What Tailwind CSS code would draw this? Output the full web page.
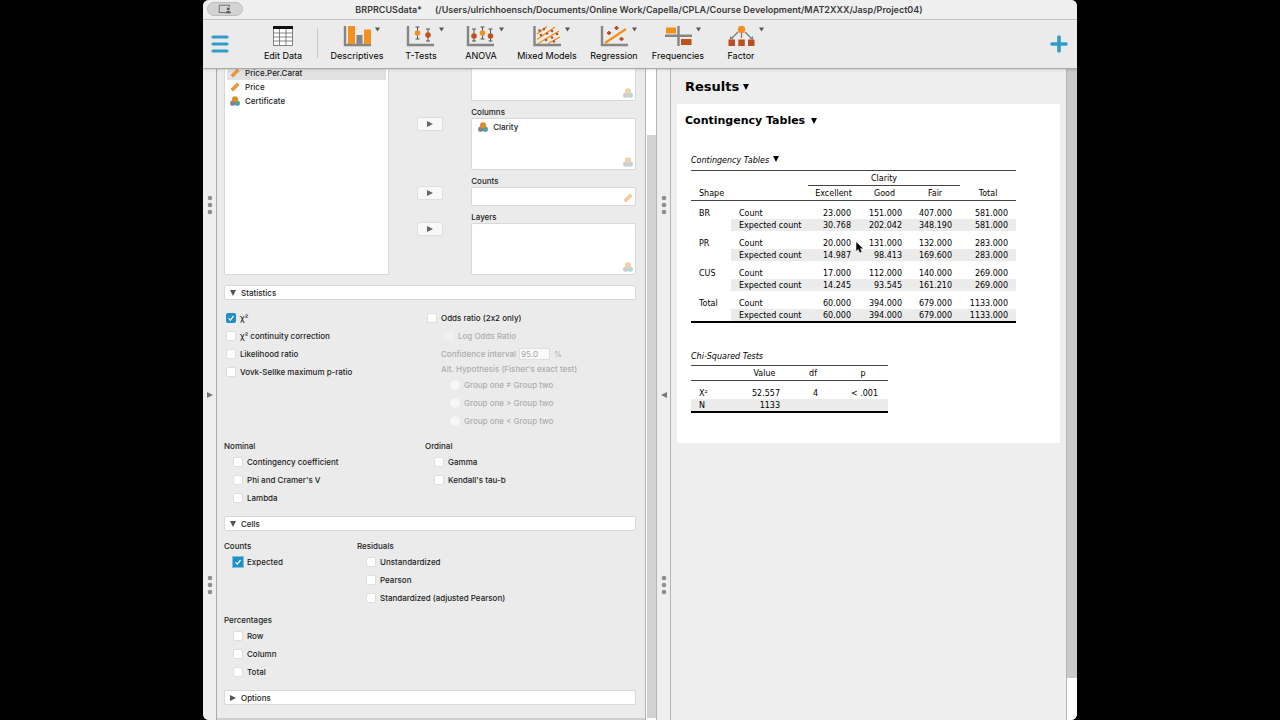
<!DOCTYPE html>
<html lang="en">
<head>
  <meta charset="UTF-8" />
  <meta name="viewport" content="width=device-width, initial-scale=1.0" />
  <title>BRPRCUSdata*</title>
  <script src="https://cdn.jsdelivr.net/npm/@tailwindcss/browser@4"></script>
</head>
<body class="h-screen overflow-hidden bg-black px-[203px] font-['Inter','Liberation_Sans',sans-serif] text-[8px] leading-3 font-medium text-[#1c1c1c]">
  <!-- Shared shapes -->
  <svg class="hidden">
    <symbol id="scale" viewBox="0 0 12 12">
      <path d="M1.2 8.4 8.4 1.2 10.9 3.7 3.7 10.900Z" fill="#e9963a" stroke="#e9963a" stroke-width="1.200" stroke-linejoin="round" />
      <path d="M3.4 6.2l1 1M5 4.6l1.3 1.3M6.7 3l1 1" stroke="#f6c58c" stroke-width=".7" />
    </symbol>
    <symbol id="nominal" viewBox="0 0 12 12">
      <circle cx="3.2" cy="8.600" r="3.100" fill="#80858a" />
      <circle cx="8.8" cy="8.600" r="3.100" fill="#4c9fa8" />
      <circle cx="6" cy="3.900" r="3.600" fill="#df8a26" />
    </symbol>
    <symbol id="tri-right" viewBox="0 0 6 6"><path d="M0 0 6 3 0 6Z" fill="currentColor" /></symbol>
    <symbol id="tri-down" viewBox="0 0 6 6"><path d="M0 0H6L3 6Z" fill="currentColor" /></symbol>
    <symbol id="tri-left" viewBox="0 0 6 6"><path d="M6 0 0 3 6 6Z" fill="currentColor" /></symbol>
    <symbol id="tick" viewBox="0 0 10 10"><path d="M2.5 5.2 4.3 7.2 7.6 2.8" fill="none" stroke="#fff" stroke-width="1.2" /></symbol>
    <symbol id="grip" viewBox="0 0 6 20">
      <circle cx="3" cy="3" r="2.3" fill="#8f8f8f" /><circle cx="3" cy="10" r="2.3" fill="#8f8f8f" /><circle cx="3" cy="17" r="2.3" fill="#8f8f8f" />
    </symbol>
  </svg>

  <div class="flex h-full flex-col overflow-hidden rounded-md bg-[#ebebeb]">
    <!-- Title bar -->
    <header class="relative flex h-5 shrink-0 items-center justify-center border-b border-[#c6c6c6] bg-[#f0efef] pr-0.5">
      <button class="absolute top-0.5 left-1 flex h-[14px] w-9 items-center justify-center rounded-full border border-[#bdbdbd] bg-[#d3d3d3]" aria-label="Share window">
        <svg class="h-[10px] w-[14px]" viewBox="0 0 14 10" fill="none" stroke="#666" stroke-width=".9">
          <path d="M7.5 8.5H1.2V1.2H11.5V3" />
          <circle cx="10.3" cy="5" r="1.4" fill="#555" stroke="none" />
          <path d="M7.6 9.3c0-3 5.4-3 5.4 0Z" fill="#555" stroke="none" />
        </svg>
      </button>
      <h1 class="flex gap-[13px] text-[9px] font-semibold whitespace-nowrap text-[#3a3a3a]"><span>BRPRCUSdata*</span><span>(/Users/ulrichhoensch/Documents/Online Work/Capella/CPLA/Course Development/MAT2XXX/Jasp/Project04)</span></h1>
    </header>

    <!-- Ribbon -->
    <nav class="relative z-10 flex h-[49px] shrink-0 border-b border-[#a9a9a9] bg-[#ebebeb] text-[9px] font-normal text-black shadow">
      <button class="flex w-[34px] items-center justify-center" aria-label="Menu">
        <svg class="h-[18px] w-[18px]" viewBox="0 0 18 18" stroke="#2f9dcc" stroke-width="3.2" stroke-linecap="round"><path d="M2 2H16M2 9H16M2 16H16" /></svg>
      </button>
      <button class="ml-3 flex w-[68px] flex-col items-center gap-[3px] pt-[5px]">
        <svg class="h-[22px] w-[46px]" viewBox="0 0 46 22">
          <rect x="13.5" y="1.5" width="19" height="19" fill="#fff" stroke="#666" stroke-width=".8" />
          <rect x="13" y="1" width="20" height="3" fill="#111" />
          <path d="M13.5 8H32.5M13.5 12H32.5M13.5 16H32.5M19.5 4V20.5M26 4V20.5" stroke="#666" stroke-width=".8" />
        </svg>
        <span>Edit Data</span>
      </button>
      <div class="mt-2 h-[30px] w-[7px] border-l border-[#c9c9c9]"></div>
      <button class="flex w-[66px] flex-col items-center gap-[3px] pt-[5px]">
        <svg class="h-[22px] w-[46px]" viewBox="0 0 46 22">
          <path d="M11 1V20H37" fill="none" stroke="#858585" stroke-width="2.4" />
          <path d="M14 1H21V19H14ZM30 4.500H37V19H30Z" fill="#f4901e" /><path d="M22.500 10H28.500V19H22.500Z" fill="#858585" />
          <path d="M41 2.500H46L43.500 6.500Z" fill="#555" />
        </svg>
        <span>Descriptives</span>
      </button>
      <button class="flex w-[62px] flex-col items-center gap-[3px] pt-[5px]">
        <svg class="h-[22px] w-[46px]" viewBox="0 0 46 22">
          <path d="M10 1V20H36" fill="none" stroke="#858585" stroke-width="2.4" />
          <path d="M19.500 2V14M17.500 2H21.500M17.500 14H21.500M30 4V16M28 4H32M28 16H32" stroke="#555" />
          <circle cx="19.500" cy="8" r="2.800" fill="#f4901e" /><circle cx="30" cy="10" r="2.800" fill="#c1501c" />
          <path d="M41 2.500H46L43.500 6.500Z" fill="#555" />
        </svg>
        <span>T-Tests</span>
      </button>
      <button class="flex w-[58px] flex-col items-center gap-[3px] pt-[5px]">
        <svg class="h-[22px] w-[46px]" viewBox="0 0 46 22">
          <path d="M10 1V20H36" fill="none" stroke="#858585" stroke-width="2.4" />
          <path d="M16 4V16M14 4H18M14 16H18M24.500 2V14M22.500 2H26.500M22.500 14H26.500M32.500 4V16M30.500 4H34.500M30.500 16H34.500" stroke="#555" />
          <circle cx="16" cy="11" r="2.800" fill="#c1501c" /><circle cx="24.500" cy="8" r="2.800" fill="#f4901e" /><circle cx="32.500" cy="11" r="2.800" fill="#c1501c" />
          <path d="M41 2.500H46L43.500 6.500Z" fill="#555" />
        </svg>
        <span>ANOVA</span>
      </button>
      <button class="flex w-[74px] flex-col items-center gap-[3px] pt-[5px]">
        <svg class="h-[22px] w-[46px]" viewBox="0 0 46 22">
          <path d="M10.500 1V20H37" fill="none" stroke="#858585" stroke-width="2.4" />
          <path d="M13 9 23 1.500M13 14.500 31 2M14 18.500 35 6M24 18.500 36 12" stroke="#f4901e" stroke-width="1.400" />
          <g fill="#b9501f"><circle cx="15.500" cy="5.500" r="1.300" /><circle cx="20" cy="4" r="1.300" /><circle cx="17" cy="10" r="1.300" /><circle cx="23" cy="8.500" r="1.300" /><circle cx="28" cy="6" r="1.300" /><circle cx="22" cy="15" r="1.300" /><circle cx="28" cy="12.500" r="1.300" /><circle cx="33" cy="9" r="1.300" /><circle cx="30" cy="16.500" r="1.300" /></g>
          <path d="M41 2.500H46L43.500 6.500Z" fill="#555" />
        </svg>
        <span class="whitespace-nowrap">Mixed Models</span>
      </button>
      <button class="flex w-[60px] flex-col items-center gap-[3px] pt-[5px]">
        <svg class="h-[22px] w-[46px]" viewBox="0 0 46 22">
          <path d="M11 1V20H37" fill="none" stroke="#858585" stroke-width="2.4" />
          <path d="M14 18 35 4" stroke="#f4901e" stroke-width="2.200" />
          <path d="M16 8H20M18 6V10M23.500 3H27.500M25.500 1V5M28.500 14H32.500M30.500 12V16" stroke="#b9501f" stroke-width="1.800" />
          <path d="M41 2.500H46L43.500 6.500Z" fill="#555" />
        </svg>
        <span>Regression</span>
      </button>
      <button class="flex w-[68px] flex-col items-center gap-[3px] pt-[5px]">
        <svg class="h-[22px] w-[46px]" viewBox="0 0 46 22">
          <path d="M23.500 1V21M10 10.800H37" stroke="#858585" stroke-width="2.400" />
          <rect x="11" y="2.500" width="10" height="6" fill="#f4901e" /><rect x="26" y="14" width="10.500" height="6" fill="#c1501c" />
          <path d="M41 2.500H46L43.500 6.500Z" fill="#555" />
        </svg>
        <span>Frequencies</span>
      </button>
      <button class="flex w-[58px] flex-col items-center gap-[3px] pt-[5px]">
        <svg class="h-[22px] w-[46px]" viewBox="0 0 46 22">
          <path d="M20 7 14 13M23.500 7V13M27 7 33 13" stroke="#777" stroke-width="1.200" />
          <path d="M12 14.200V11L15.300 14.200ZM35 14.200V11L31.700 14.200Z" fill="#777" />
          <circle cx="23.500" cy="4.500" r="3.700" fill="#f4901e" />
          <path d="M10.500 14.500H17V21H10.500ZM20.300 14.500H26.800V21H20.300ZM30 14.500H36.500V21H30Z" fill="#b9501f" />
          <path d="M41 2.500H46L43.500 6.500Z" fill="#555" />
        </svg>
        <span>Factor</span>
      </button>
      <button class="ml-auto flex w-9 items-center justify-center" aria-label="Show modules">
        <svg class="h-[18px] w-[18px]" viewBox="0 0 18 18" stroke="#2f9dcc" stroke-width="3.6" stroke-linecap="round"><path d="M2 9H16M9 2V16" /></svg>
      </button>
    </nav>

    <main class="flex min-h-0 flex-1">
      <!-- Data splitter -->
      <div class="flex w-[14px] shrink-0 flex-col items-center justify-center gap-[177px] border-r border-[#a9a9a9] bg-[#efefef]">
        <svg class="h-5 w-[6px] shrink-0"><use href="#grip" /></svg>
        <svg class="h-[6px] w-[6px] shrink-0 text-[#777]"><use href="#tri-right" /></svg>
        <svg class="h-5 w-[6px] shrink-0"><use href="#grip" /></svg>
      </div>

      <!-- Analysis form -->
      <form class="min-w-0 flex-1 overflow-hidden pr-[9px] pl-[7px]">
        <div class="grid grid-cols-[2fr_3fr]">
          <ul class="overflow-hidden rounded-b-[2px] border border-t-0 border-[#d8d8d8] bg-white px-0.5">
            <li class="-mt-[3px] flex h-[14px] items-center gap-[5px] bg-[#e2e2e2] pl-[3px]"><svg class="h-[10px] w-[10px]"><use href="#scale" /></svg>Price.Per.Carat</li>
            <li class="flex h-[14px] items-center gap-[5px] pl-[3px]"><svg class="h-[10px] w-[10px]"><use href="#scale" /></svg>Price</li>
            <li class="flex h-[14px] items-center gap-[5px] pl-[3px]"><svg class="h-[10px] w-[10px]"><use href="#nominal" /></svg>Certificate</li>
          </ul>
          <div>
            <div class="ml-[33.33%] flex h-8 items-end justify-end rounded-b-[2px] border border-t-0 border-[#d8d8d8] bg-white p-0.5">
              <svg class="h-[10px] w-[10px] opacity-40"><use href="#nominal" /></svg>
            </div>
            <div class="grid grid-cols-[1fr_2fr]">
              <button type="button" class="mt-4 flex h-[14px] w-[26px] items-center justify-center justify-self-center rounded-[2px] border border-[#dedede] bg-[#f8f8f8] text-[#666]" aria-label="Move to columns"><svg class="h-[6px] w-[6px]"><use href="#tri-right" /></svg></button>
              <div>
                <h3 class="h-[17px] pt-[5px]">Columns</h3>
                <div class="flex h-[52px] justify-between rounded-[2px] border border-[#d8d8d8] bg-white p-0.5 pl-[6px]">
                  <span class="flex h-[11px] items-center gap-[5px]"><svg class="h-[10px] w-[10px]"><use href="#nominal" /></svg>Clarity</span>
                  <svg class="h-[10px] w-[10px] self-end opacity-40"><use href="#nominal" /></svg>
                </div>
              </div>
              <button type="button" class="mt-4 flex h-[14px] w-[26px] items-center justify-center justify-self-center rounded-[2px] border border-[#dedede] bg-[#f8f8f8] text-[#666]" aria-label="Move to counts"><svg class="h-[6px] w-[6px]"><use href="#tri-right" /></svg></button>
              <div>
                <h3 class="h-[17px] pt-[5px]">Counts</h3>
                <div class="flex h-[19px] items-end justify-end rounded-[2px] border border-[#d8d8d8] bg-white p-0.5">
                  <svg class="h-[10px] w-[10px] opacity-50"><use href="#scale" /></svg>
                </div>
              </div>
              <button type="button" class="mt-4 flex h-[14px] w-[26px] items-center justify-center justify-self-center rounded-[2px] border border-[#dedede] bg-[#f8f8f8] text-[#666]" aria-label="Move to layers"><svg class="h-[6px] w-[6px]"><use href="#tri-right" /></svg></button>
              <div>
                <h3 class="h-[17px] pt-[5px]">Layers</h3>
                <div class="flex h-[52px] items-end justify-end rounded-[2px] border border-[#d8d8d8] bg-white p-0.5">
                  <svg class="h-[10px] w-[10px] opacity-40"><use href="#nominal" /></svg>
                </div>
              </div>
            </div>
          </div>
        </div>

        <!-- Statistics -->
        <button type="button" class="mt-[10px] flex h-[15px] w-full items-center gap-[5px] rounded-[2px] border border-[#d8d8d8] bg-white pl-[5px]"><svg class="h-[6px] w-[6px] text-[#555]"><use href="#tri-down" /></svg>Statistics</button>
        <div class="mt-[9px] grid grid-cols-[201px_1fr]">
          <div class="pl-0.5">
            <label class="relative flex h-[18px] items-center gap-1"><input type="checkbox" checked class="h-[10px] w-[10px] appearance-none rounded-[2px] bg-[#1f8fc4]" /><svg class="pointer-events-none absolute left-0 h-[10px] w-[10px]"><use href="#tick" /></svg>χ²</label>
            <label class="flex h-[18px] items-center gap-1"><input type="checkbox" class="h-[10px] w-[10px] appearance-none rounded-[2px] border border-[#dedede] bg-white" />χ² continuity correction</label>
            <label class="flex h-[18px] items-center gap-1"><input type="checkbox" class="h-[10px] w-[10px] appearance-none rounded-[2px] border border-[#dedede] bg-white" />Likelihood ratio</label>
            <label class="flex h-[18px] items-center gap-1"><input type="checkbox" class="h-[10px] w-[10px] appearance-none rounded-[2px] border border-[#dedede] bg-white" />Vovk-Sellke maximum p-ratio</label>
          </div>
          <div class="pl-0.5">
            <label class="flex h-[18px] items-center gap-1 [font-feature-settings:'calt'_0]"><input type="checkbox" class="h-[10px] w-[10px] appearance-none rounded-[2px] border border-[#dedede] bg-white" />Odds ratio (2x2 only)</label>
            <fieldset disabled class="pl-[14px] text-[#adadad]">
              <label class="flex h-[18px] items-center gap-1 pl-[3px]"><input type="checkbox" class="h-[10px] w-[10px] appearance-none rounded-[2px] bg-[#f0f0f0]" />Log Odds Ratio</label>
              <div class="flex h-[17px] items-center gap-[3px]"><label for="ci">Confidence interval</label><input id="ci" type="text" value="95.0" class="h-3 w-[31px] border border-[#dedede] bg-[#fafafa] px-px" /><span class="pl-px">%</span></div>
              <p class="h-[14px] pt-px">Alt. Hypothesis (Fisher's exact test)</p>
              <label class="flex h-[18px] items-center gap-1 pl-[9px]"><input type="radio" name="alt" class="h-[10px] w-[10px] appearance-none rounded-full bg-[#f6f6f6]" />Group one ≠ Group two</label>
              <label class="flex h-[18px] items-center gap-1 pl-[9px]"><input type="radio" name="alt" class="h-[10px] w-[10px] appearance-none rounded-full bg-[#f6f6f6]" />Group one &gt; Group two</label>
              <label class="flex h-[18px] items-center gap-1 pl-[9px]"><input type="radio" name="alt" class="h-[10px] w-[10px] appearance-none rounded-full bg-[#f6f6f6]" />Group one &lt; Group two</label>
            </fieldset>
          </div>
        </div>
        <div class="mt-[10px] grid grid-cols-[201px_1fr]">
          <div>
            <h3 class="h-[13px]">Nominal</h3>
            <label class="flex h-[18px] items-center gap-1 pl-[9px]"><input type="checkbox" class="h-[10px] w-[10px] appearance-none rounded-[2px] border border-[#dedede] bg-white" />Contingency coefficient</label>
            <label class="flex h-[18px] items-center gap-1 pl-[9px]"><input type="checkbox" class="h-[10px] w-[10px] appearance-none rounded-[2px] border border-[#dedede] bg-white" />Phi and Cramer's V</label>
            <label class="flex h-[18px] items-center gap-1 pl-[9px]"><input type="checkbox" class="h-[10px] w-[10px] appearance-none rounded-[2px] border border-[#dedede] bg-white" />Lambda</label>
          </div>
          <div>
            <h3 class="h-[13px]">Ordinal</h3>
            <label class="flex h-[18px] items-center gap-1 pl-[9px]"><input type="checkbox" class="h-[10px] w-[10px] appearance-none rounded-[2px] border border-[#dedede] bg-white" />Gamma</label>
            <label class="flex h-[18px] items-center gap-1 pl-[9px]"><input type="checkbox" class="h-[10px] w-[10px] appearance-none rounded-[2px] border border-[#dedede] bg-white" />Kendall's tau-b</label>
          </div>
        </div>

        <!-- Cells -->
        <button type="button" class="mt-[9px] flex h-[15px] w-full items-center gap-[5px] rounded-[2px] border border-[#d8d8d8] bg-white pl-[5px]"><svg class="h-[6px] w-[6px] text-[#555]"><use href="#tri-down" /></svg>Cells</button>
        <div class="mt-[9px] grid grid-cols-[133px_1fr]">
          <div>
            <h3 class="h-[13px]">Counts</h3>
            <label class="relative flex h-[18px] items-center gap-1 pl-[9px]"><input type="checkbox" checked class="h-[10px] w-[10px] appearance-none bg-[#1f8fc4] ring-1 ring-[#7cc0ea]" /><svg class="pointer-events-none absolute left-[9px] h-[10px] w-[10px]"><use href="#tick" /></svg>Expected</label>
          </div>
          <div>
            <h3 class="h-[13px]">Residuals</h3>
            <label class="flex h-[18px] items-center gap-1 pl-[9px]"><input type="checkbox" class="h-[10px] w-[10px] appearance-none rounded-[2px] border border-[#dedede] bg-white" />Unstandardized</label>
            <label class="flex h-[18px] items-center gap-1 pl-[9px]"><input type="checkbox" class="h-[10px] w-[10px] appearance-none rounded-[2px] border border-[#dedede] bg-white" />Pearson</label>
            <label class="flex h-[18px] items-center gap-1 pl-[9px]"><input type="checkbox" class="h-[10px] w-[10px] appearance-none rounded-[2px] border border-[#dedede] bg-white" />Standardized (adjusted Pearson)</label>
          </div>
        </div>
        <div class="mt-[7px]">
          <h3 class="h-[13px]">Percentages</h3>
          <label class="flex h-[18px] items-center gap-1 pl-[9px]"><input type="checkbox" class="h-[10px] w-[10px] appearance-none rounded-[2px] border border-[#dedede] bg-white" />Row</label>
          <label class="flex h-[18px] items-center gap-1 pl-[9px]"><input type="checkbox" class="h-[10px] w-[10px] appearance-none rounded-[2px] border border-[#dedede] bg-white" />Column</label>
          <label class="flex h-[18px] items-center gap-1 pl-[9px]"><input type="checkbox" class="h-[10px] w-[10px] appearance-none rounded-[2px] border border-[#dedede] bg-white" />Total</label>
        </div>
        <button type="button" class="mt-[9px] flex h-[15px] w-full items-center gap-[5px] rounded-[2px] border border-[#d8d8d8] bg-white pl-[5px]"><svg class="h-[6px] w-[6px] text-[#555]"><use href="#tri-right" /></svg>Options</button>
        <div class="mt-[13px] -mr-[9px] -ml-[7px] border-t-2 border-[#cfcfcf]"></div>
      </form>

      <!-- Form scroll bar -->
      <div class="flex w-[11px] shrink-0 flex-col border-l border-[#b5b5b5] bg-white pl-px">
        <div class="mt-[66px] mb-0.5 flex-1 bg-[#d2d2d2]"></div>
      </div>

      <!-- Results splitter -->
      <div class="flex w-[15px] shrink-0 flex-col items-center justify-center gap-[177px] border-x border-[#b5b5b5] bg-[#efefef]">
        <svg class="h-5 w-[6px] shrink-0"><use href="#grip" /></svg>
        <svg class="h-[6px] w-[6px] shrink-0 text-[#777]"><use href="#tri-left" /></svg>
        <svg class="h-5 w-[6px] shrink-0"><use href="#grip" /></svg>
      </div>

      <!-- Results -->
      <section class="w-[395px] shrink-0 bg-[#eeeeee] px-[6px] font-['DejaVu_Sans',sans-serif] font-normal text-black">
        <h2 class="flex h-[35px] items-center gap-1 pl-2 text-[13px] font-bold">Results <svg class="h-[6px] w-[6px]"><use href="#tri-down" /></svg></h2>
        <div class="relative bg-white px-[14px] pt-[9px] pb-[30px]">
          <h3 class="-ml-[6px] flex h-4 items-center gap-[6px] text-[11px] font-bold">Contingency Tables <svg class="h-[6px] w-[6px]"><use href="#tri-down" /></svg></h3>
          <h4 class="mt-[26px] mb-[3px] flex h-3 items-center gap-1 italic">Contingency Tables <svg class="mb-1 h-[6px] w-[6px]"><use href="#tri-down" /></svg></h4>
          <table class="w-[325px] table-fixed border-separate border-spacing-0 border-t border-b-2 border-t-[#444] border-b-black leading-[11px]">
            <colgroup><col class="w-10" /><col class="w-[77px]" /><col class="w-[51px]" /><col class="w-[51px]" /><col class="w-[50px]" /><col /></colgroup>
            <thead class="[&_th]:h-[15px] [&_th]:p-0 [&_th]:pt-px [&_th]:font-normal">
              <tr><th colspan="2"></th><th colspan="3" class="border-b border-[#444]">Clarity</th><th></th></tr>
              <tr class="[&_th]:border-b [&_th]:border-[#444]"><th colspan="2"><div class="pl-2 text-left">Shape</div></th><th>Excellent</th><th>Good</th><th>Fair</th><th>Total</th></tr>
            </thead>
            <tbody class="text-right [&_td]:p-0 [&_td]:pt-px [&_td]:pr-2 [&_th]:p-0 [&_th]:pt-px [&_th]:pl-2 [&_th]:text-left [&_th]:font-normal">
              <tr class="h-[6px]"></tr>
              <tr><th>BR</th><th>Count</th><td>23.000</td><td>151.000</td><td>407.000</td><td>581.000</td></tr>
              <tr><th></th><th class="bg-[#ebebeb]">Expected count</th><td class="bg-[#ebebeb]">30.768</td><td class="bg-[#ebebeb]">202.042</td><td class="bg-[#ebebeb]">348.190</td><td class="bg-[#ebebeb]">581.000</td></tr>
              <tr class="h-[6px]"></tr>
              <tr><th>PR</th><th>Count</th><td>20.000</td><td>131.000</td><td>132.000</td><td>283.000</td></tr>
              <tr><th></th><th class="bg-[#ebebeb]">Expected count</th><td class="bg-[#ebebeb]">14.987</td><td class="bg-[#ebebeb]">98.413</td><td class="bg-[#ebebeb]">169.600</td><td class="bg-[#ebebeb]">283.000</td></tr>
              <tr class="h-[6px]"></tr>
              <tr><th>CUS</th><th>Count</th><td>17.000</td><td>112.000</td><td>140.000</td><td>269.000</td></tr>
              <tr><th></th><th class="bg-[#ebebeb]">Expected count</th><td class="bg-[#ebebeb]">14.245</td><td class="bg-[#ebebeb]">93.545</td><td class="bg-[#ebebeb]">161.210</td><td class="bg-[#ebebeb]">269.000</td></tr>
              <tr class="h-[6px]"></tr>
              <tr><th>Total</th><th>Count</th><td>60.000</td><td>394.000</td><td>679.000</td><td>1133.000</td></tr>
              <tr><th></th><th class="bg-[#ebebeb]">Expected count</th><td class="bg-[#ebebeb]">60.000</td><td class="bg-[#ebebeb]">394.000</td><td class="bg-[#ebebeb]">679.000</td><td class="bg-[#ebebeb]">1133.000</td></tr>
            </tbody>
          </table>

          <h4 class="mt-[28px] mb-0.5 h-3 italic">Chi-Squared Tests</h4>
          <table class="w-[197px] table-fixed border-separate border-spacing-0 border-t border-b-2 border-t-[#444] border-b-black leading-[11px]">
            <colgroup><col class="w-[50px]" /><col class="w-[47px]" /><col class="w-[50px]" /><col /></colgroup>
            <thead>
              <tr class="[&_th]:h-[15px] [&_th]:border-b [&_th]:border-[#444] [&_th]:p-0 [&_th]:pt-px [&_th]:font-normal"><th></th><th>Value</th><th>df</th><th>p</th></tr>
            </thead>
            <tbody class="text-right [&_td]:h-3 [&_td]:pt-px [&_td]:pb-0 [&_th]:p-0 [&_th]:pt-px [&_th]:pl-2 [&_th]:text-left [&_th]:font-normal">
              <tr class="h-[6px]"></tr>
              <tr><th>Χ²</th><td class="pr-2">52.557</td><td class="pr-5">4</td><td class="pr-2.5">&lt; .001</td></tr>
              <tr class="bg-[#ebebeb]"><th>N</th><td class="pr-2">1133</td><td></td><td></td></tr>
            </tbody>
          </table>

          <!-- Pointer -->
          <svg class="absolute top-[138px] left-[179px] h-[11px] w-[7px]" viewBox="0 0 7 11"><path d="M.5.5V8.500L2.400 6.800 3.900 10.300 5.300 9.700 3.800 6.300H6.500Z" fill="#000" stroke="#000" stroke-width=".4" /></svg>
        </div>
      </section>

      <!-- Results scroll bar -->
      <div class="flex w-[11px] shrink-0 flex-col border-l border-[#b5b5b5] bg-white">
        <div class="mb-[42px] flex-1 bg-[#c9c9c9]"></div>
      </div>
    </main>
  </div>
</body>
</html>
